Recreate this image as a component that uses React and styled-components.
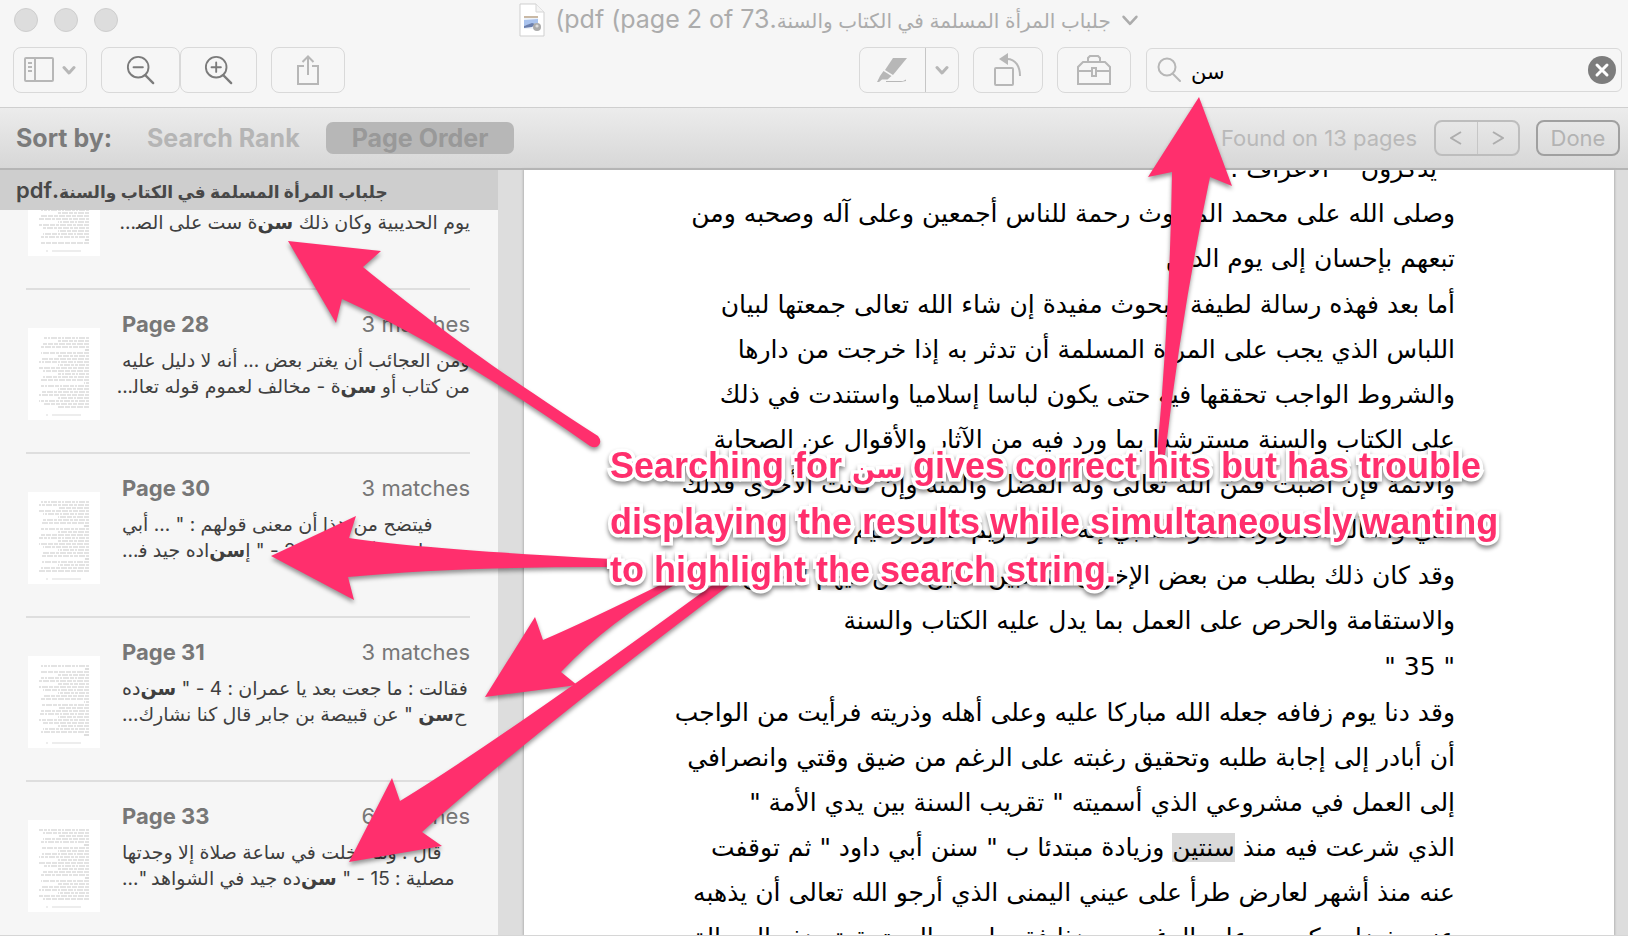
import { useState } from "react";
import styled, { createGlobalStyle } from "styled-components";

const GlobalStyle = createGlobalStyle`
  * {
    box-sizing: border-box;
  }
  body {
    margin: 0;
    background: #f6f6f6;
    font-family: Inter, "DejaVu Sans", sans-serif;
  }
  button, input {
    font: inherit;
  }
`

const Window = styled.div`
  position: relative;
  display: flex;
  flex-direction: column;
  height: 100vh;
  overflow: hidden;
  background: #f6f6f6;
  border-bottom: 1px solid #d6d6d6;
`

const TitleBar = styled.header`
  display: grid;
  grid-template-columns: 1fr auto 1fr;
  align-items: center;
  height: 40px;
  flex: none;
  padding: 0 14px;
`
const Lights = styled.div`
  display: flex;
  gap: 16px;
`
const Light = styled.button`
  width: 24px;
  height: 24px;
  padding: 0;
  border: 1px solid #cecece;
  border-radius: 50%;
  background: #dddddd;
`
const Title = styled.h1`
  display: flex;
  align-items: center;
  gap: 10px;
  margin: 0;
  padding-left: 30px;
  font-size: 25px;
  font-weight: 400;
  line-height: 32px;
  color: #acacac;
  white-space: nowrap;
`
const Arabic = styled.span`
  font-size: ${props => props.$size}px;
`

const Toolbar = styled.div`
  display: flex;
  align-items: center;
  height: 68px;
  flex: none;
  padding: 0 6px 8px 13px;
  border-bottom: 1px solid #cfcfcf;
`
const ToolButton = styled.button`
  display: flex;
  align-items: center;
  justify-content: center;
  gap: 8px;
  width: ${props => props.$width}px;
  height: 46px;
  margin-right: ${props => props.$after || 0}px;
  padding: 0;
  border: 1px solid #d9d9d9;
  border-radius: 8px;
  background: #f6f6f6;
  color: ${props => props.$strong ? "#7b7b7b" : "#b7b7b7"};
`
const SplitButton = styled.div`
  display: flex;
  width: 100px;
  height: 46px;
  margin-right: 14px;
  border: 1px solid #d9d9d9;
  border-radius: 8px;
`
const SplitPart = styled.button`
  display: flex;
  align-items: center;
  justify-content: center;
  flex: ${props => props.$grow};
  padding: 0;
  border: 0;
  border-left: ${props => props.$divided ? "1px solid #c6c6c6" : "0"};
  background: none;
  color: #b7b7b7;
`
const Spacer = styled.div`
  flex: 1;
`
const SearchField = styled.label`
  display: flex;
  align-items: center;
  gap: 10px;
  flex: 0 1 476px;
  min-width: 0;
  height: 44px;
  padding: 0 5px 0 10px;
  border: 1px solid #d9d9d9;
  border-radius: 6px;
`
const SearchInput = styled.input`
  flex: 1;
  min-width: 0;
  height: 40px;
  padding: 4px 0 0;
  border: 0;
  outline: 0;
  background: none;
  font-family: "DejaVu Sans", sans-serif;
  font-size: 21px;
  text-align: left;
  color: #000;
`
const ClearButton = styled.button`
  display: flex;
  padding: 0;
  border: 0;
  background: none;
`

const SortBar = styled.div`
  display: flex;
  align-items: center;
  height: 62px;
  flex: none;
  padding: 0 8px 0 16px;
  border-bottom: 2px solid #b5b5b5;
  background: linear-gradient(#ececec, #d7d7d7);
  font-size: 25px;
`
const SortLabel = styled.span`
  width: 111px;
  font-weight: 700;
  color: #7b7b7b;
`
const SortButton = styled.button`
  height: 32px;
  margin-right: 6px;
  padding: 0 ${props => props.$active ? 26 : 20}px;
  border: 0;
  border-radius: 7px;
  background: ${props => props.$active ? "#b7b7b7" : "none"};
  font-weight: 700;
  line-height: 32px;
  color: ${props => props.$active ? "#999999" : "#b5b5b5"};
`
const Found = styled.span`
  margin-right: 17px;
  font-size: 22px;
  color: #b9b9b9;
`
const Pager = styled.div`
  display: flex;
  width: 86px;
  height: 36px;
  margin-right: 16px;
  border: 2px solid #bdbdbd;
  border-radius: 8px;
`
const DoneButton = styled.button`
  width: 84px;
  height: 36px;
  padding: 0;
  border: 2px solid #a0a0a0;
  border-radius: 8px;
  background: none;
  font-size: 22px;
  color: #b3b3b3;
`

const Body = styled.main`
  display: flex;
  flex: 1;
  min-height: 0;
`
const Sidebar = styled.aside`
  display: flex;
  flex-direction: column;
  flex: 0 0 498px;
  overflow: hidden;
`
const FileName = styled.h2`
  z-index: 1;
  flex: none;
  height: 40px;
  margin: 0;
  padding: 0 16px;
  background: #cecece;
  font-size: 22px;
  font-weight: 600;
  line-height: 40px;
  text-align: left;
  color: #484848;
  white-space: nowrap;
`
const Results = styled.ul`
  margin: -84px 0 0;
  padding: 0 28px 0 26px;
  list-style: none;
`
const Result = styled.li`
  display: flex;
  align-items: flex-start;
  gap: 22px;
  height: 164px;
  padding: 20px 0 0 2px;
  border-bottom: 2px solid #dedede;
`
const Thumb = styled.svg`
  flex: none;
  margin-top: 18px;
  background: #fff;
`
const ResultText = styled.div`
  flex: 1;
  min-width: 0;
`
const ResultHead = styled.div`
  display: flex;
  justify-content: space-between;
  height: 38px;
  font-size: 22px;
  line-height: 28px;
  color: #777777;
`
const Snippet = styled.p`
  margin: 0;
  font-size: 19px;
  line-height: 26px;
  text-align: left;
  color: #3f3f3f;
  white-space: nowrap;
`

const Viewer = styled.section`
  display: flex;
  flex: 1;
  min-width: 0;
  padding: 0 14px 0 26px;
  background: #dddddd;
`
const Page = styled.article`
  flex: 1;
  min-width: 0;
  overflow: hidden;
  padding-right: 159px;
  background: #fff;
  box-shadow: 0 0 2px 1px #b5b5b5;
  font-family: "DejaVu Sans", sans-serif;
  font-size: 25px;
  line-height: 45px;
  color: #000;
  white-space: pre;
`
const Paragraph = styled.p`
  margin: ${props => props.$first ? "-24px 18px 0 0" : "0 0 1px"};
`
const Mark = styled.mark`
  background: #d9d9d9;
  color: inherit;
`

const Arrows = styled.svg`
  position: absolute;
  top: 0;
  left: 0;
  pointer-events: none;
  filter: drop-shadow(0 3px 2px rgba(0, 0, 0, 0.4));
`
const Note = styled.p`
  position: absolute;
  top: 438px;
  left: 610px;
  z-index: 2;
  margin: 0;
  font-family: "Liberation Sans", "DejaVu Sans", sans-serif;
  font-size: 36px;
  font-weight: 700;
  color: #ff2f6d;
  white-space: nowrap;
  -webkit-text-stroke: 7px #fff;
  paint-order: stroke fill;
  filter: drop-shadow(0 3px 2px rgba(0, 0, 0, 0.45));
`
const NoteLine = styled.span`
  display: block;
  height: ${props => props.$height}px;
  line-height: 56px;
`

// the match is cut off from its neighbours, so its letters do not join them
const Hit = ({ children }) => <b>{`\u200c${children}\u200c`}</b>

const RESULTS = [
  { lines: ["\u00a0", <>يوم الحديبية وكان ذلك <Hit>سن</Hit>ة ست على الص{"\u200d..."}</>] },
  {
    page: 28, matches: 3,
    lines: ["ومن العجائب أن يغتر بعض ... أنه لا دليل عليه", <>من كتاب أو <Hit>سن</Hit>ة - مخالف لعموم قوله تعال{"\u200d..."}</>]
  },
  {
    page: 30, matches: 3,
    lines: ['فيتضح من هذا أن معنى قولهم : " ... أبي', <>علي وللآخر " ... : 2 - " إ<Hit>سن</Hit>اده جيد ف{"\u200d..."}</>]
  },
  {
    page: 31, matches: 3,
    lines: [<>فقالت : ما جعت بعد يا عمران : 4 - " <Hit>سن</Hit>ده</>, <>ح<Hit>سن</Hit> " عن قبيصة بن جابر قال كنا نشارك...</>]
  },
  {
    page: 33, matches: 6,
    lines: ["قال : وما دخلت في ساعة صلاة إلا وجدتها", <>مصلية : 15 - " <Hit>سن</Hit>ده جيد في الشواهد "...</>]
  }
]

const PARAGRAPHS = [
  ["وصلى الله على محمد المبعوث رحمة للناس أجمعين وعلى آله وصحبه ومن", "تبعهم بإحسان إلى يوم الدين"],
  [
    "أما بعد فهذه رسالة لطيفة وبحوث مفيدة إن شاء الله تعالى جمعتها لبيان",
    "اللباس الذي يجب على المرأة المسلمة أن تدثر به إذا خرجت من دارها",
    "والشروط الواجب تحققها فيه حتى يكون لباسا إسلاميا واستندت في ذلك",
    "على الكتاب والسنة مسترشدا بما ورد فيه من الآثار والأقوال عن الصحابة",
    "والأئمة فإن أصبت فمن الله تعالى وله الفضل والمنة وإن كانت الأخرى فذلك",
    "مني وأسأله العفو والمغفرة لذنبي إنه عفو كريم غفور رحيم"
  ],
  ["وقد كان ذلك بطلب من بعض الإخوان المحبين الذين نظن فيهم الصلاح", "والاستقامة والحرص على العمل بما يدل عليه الكتاب والسنة"],
  ['" 35 "'],
  [
    "وقد دنا يوم زفافه جعله الله مباركا عليه وعلى أهله وذريته فرأيت من الواجب",
    "أن أبادر إلى إجابة طلبه وتحقيق رغبته على الرغم من ضيق وقتي وانصرافي",
    'إلى العمل في مشروعي الذي أسميته " تقريب السنة بين يدي الأمة "',
    <>الذي شرعت فيه منذ <Mark>سنتين</Mark> وزيادة مبتدئا ب " سنن أبي داود " ثم توقفت</>,
    "عنه منذ أشهر لعارض طرأ على عيني اليمنى الذي أرجو الله تعالى أن يذهبه",
    "عني بفضله وكرمه وعلى الرغم من هذا فقد بادرت إلى تحقيق هذه الرسالة"
  ]
]

const Chevron = ({ size = 14, weight = 3 }) => (
  <svg width={size} height={size} viewBox="0 0 14 14" fill="none" stroke="currentColor" strokeWidth={weight} strokeLinecap="round" strokeLinejoin="round">
    <path d="M2 4.5l5 5.5 5-5.5" />
  </svg>
)

const DocumentIcon = () => (
  <svg width="26" height="34" viewBox="0 0 26 34">
    <path d="M1 1h16l8 8v24H1z" fill="#fff" stroke="#cfcfcf" />
    <path d="M17 1v8h8" fill="#f4f4f4" stroke="#d5d5d5" />
    <path d="M5 13h14v13H5z" fill="#eef3fa" />
    <path d="M5 13h14v2H5z" fill="#c9b9a5" />
    <path d="M5 17l14-1v4l-7 1-7 2z" fill="#a9c3ee" />
    <path d="M5 23l8-3 4 1-4 3-8 1z" fill="#6a7fae" />
    <circle cx="18" cy="24" r="4" fill="#aaa" />
    <circle cx="18" cy="23" r="1.6" fill="#ddd" />
  </svg>
)

const SidebarIcon = () => (
  <svg width="30" height="26" viewBox="0 0 30 26" fill="none" stroke="currentColor" strokeWidth="2">
    <rect x="1" y="1" width="28" height="23" rx="1" />
    <path d="M11 1v23M4 6h4M4 10h4M4 14h4" />
  </svg>
)

const ZoomIcon = ({ plus }) => (
  <svg width="30" height="30" viewBox="0 0 32 32" fill="none" stroke="currentColor" strokeWidth="2" strokeLinecap="round">
    <circle cx="13" cy="13" r="11" />
    <path d="M20.5 21.5L29 30" strokeWidth="2.4" />
    <path d={plus ? "M8 13h10M13 8v10" : "M8 13h10"} />
  </svg>
)

const ShareIcon = () => (
  <svg width="24" height="32" viewBox="0 0 24 32" fill="none" stroke="currentColor" strokeWidth="2">
    <path d="M8 12H2v18h20V12h-6M12 21V3M6.500 8L12 2.500 17.500 8" />
  </svg>
)

const MarkerIcon = () => (
  <svg width="32" height="26" viewBox="0 0 32 26" fill="currentColor">
    <path d="M17 1h14L17 18l-8-5z" />
    <path d="M7.500 14l8 5-4 3.500H6L3 25H1l3-6z" />
    <path d="M10 24h17l3-1.500v1.500L25 25H10z" />
  </svg>
)

const RotateIcon = () => (
  <svg width="30" height="34" viewBox="0 0 30 34" fill="none" stroke="currentColor" strokeWidth="2">
    <rect x="2" y="15" width="18" height="17" rx="1" />
    <path d="M14 6c9 0 13 8 13 17" />
    <path d="M6 6l9-6v12z" fill="currentColor" stroke="none" />
  </svg>
)

const ToolboxIcon = () => (
  <svg width="36" height="30" viewBox="0 0 36 30" fill="none" stroke="currentColor" strokeWidth="2">
    <path d="M2 29V12l5-5h22l5 5v17zM2 16h14M20 16h14M12 7V3l2-2h8l2 2v4" />
    <rect x="16" y="13" width="4" height="8" />
  </svg>
)

const Magnifier = () => (
  <svg width="24" height="26" viewBox="0 0 24 26" fill="none" stroke="#b7b7b7" strokeWidth="2" strokeLinecap="round">
    <circle cx="10" cy="10" r="8.500" />
    <path d="M16 17l7 7" />
  </svg>
)

const ClearIcon = () => (
  <svg width="28" height="28" viewBox="0 0 28 28">
    <circle cx="14" cy="14" r="14" fill="#7d7d7d" />
    <path d="M9 9l10 10M19 9L9 19" stroke="#fff" strokeWidth="3" strokeLinecap="round" />
  </svg>
)

const Angle = ({ right }) => (
  <svg width="12" height="16" viewBox="0 0 12 16" fill="none" stroke="#adadad" strokeWidth="2">
    <path d={right ? "M1 2l10 6-10 6" : "M11 2L1 8l10 6"} />
  </svg>
)

function PageThumb({ seed }) {
  const rows = [];
  for (let i = 0; i < 24; i++) {
    const n = (i * 7 + seed * 5) % 11;
    rows.push({ y: 10 + i * 3, x: n < 1 ? 56 : n < 4 ? 30 : 11 + (n % 3) * 2 });
  }
  return (
    <Thumb width="72" height="92" viewBox="0 0 72 92" stroke="#c8c8c8" strokeWidth="1.2">
      {rows.map((row, i) => <path key={row.y} d={`M61 ${row.y}H${row.x}`} strokeDasharray={`${3 + i % 3} 1 6 1 ${2 + i % 4} 1`} />)}
      <path d="M53 87H24M20 87h-2" stroke="#dcdcdc" />
    </Thumb>
  )
}

export default function App() {
  const [query, setQuery] = useState("سن");
  const [order, setOrder] = useState("page");

  return <>
    <GlobalStyle />
    <Window>
      <TitleBar>
        <Lights>
          <Light aria-label="Close" />
          <Light aria-label="Minimize" />
          <Light aria-label="Zoom" />
        </Lights>
        <Title>
          <DocumentIcon />
          <span dir="rtl"><Arabic $size={20}>جلباب المرأة المسلمة في الكتاب والسنة</Arabic>.<bdi dir="ltr">pdf (page 2 of 73</bdi>)</span>
          <Chevron size={18} weight={2} />
        </Title>
      </TitleBar>

      <Toolbar>
        <ToolButton $width={74} $after={14} aria-label="View"><SidebarIcon /><Chevron /></ToolButton>
        <ToolButton $width={79} $strong aria-label="Zoom out"><ZoomIcon /></ToolButton>
        <ToolButton $width={77} $after={14} $strong aria-label="Zoom in"><ZoomIcon plus /></ToolButton>
        <ToolButton $width={74} aria-label="Share"><ShareIcon /></ToolButton>
        <Spacer />
        <SplitButton>
          <SplitPart $grow={2} aria-label="Highlight"><MarkerIcon /></SplitPart>
          <SplitPart $grow={1} $divided aria-label="Highlight colour"><Chevron /></SplitPart>
        </SplitButton>
        <ToolButton $width={70} $after={14} aria-label="Rotate"><RotateIcon /></ToolButton>
        <ToolButton $width={74} $after={15} aria-label="Markup"><ToolboxIcon /></ToolButton>
        <SearchField>
          <Magnifier />
          <SearchInput aria-label="Search" dir="rtl" value={query} onChange={(event) => setQuery(event.target.value)} />
          <ClearButton aria-label="Clear" onClick={() => setQuery("")}><ClearIcon /></ClearButton>
        </SearchField>
      </Toolbar>

      <SortBar>
        <SortLabel>Sort by:</SortLabel>
        <SortButton $active={order === "rank"} onClick={() => setOrder("rank")}>Search Rank</SortButton>
        <SortButton $active={order === "page"} onClick={() => setOrder("page")}>Page Order</SortButton>
        <Spacer />
        <Found>Found on 13 pages</Found>
        <Pager>
          <SplitPart $grow={1} aria-label="Previous"><Angle /></SplitPart>
          <SplitPart $grow={1} $divided aria-label="Next"><Angle right /></SplitPart>
        </Pager>
        <DoneButton>Done</DoneButton>
      </SortBar>

      <Body>
        <Sidebar>
          <FileName dir="rtl"><Arabic $size={17}>جلباب المرأة المسلمة في الكتاب والسنة</Arabic>.pdf</FileName>
          <Results>
            {RESULTS.map((result, index) => (
              <Result key={index}>
                <PageThumb seed={index} />
                <ResultText>
                  <ResultHead>
                    {result.page && <><b>Page {result.page}</b><span>{result.matches} matches</span></>}
                  </ResultHead>
                  {result.lines.map((line, i) => <Snippet key={i} dir="rtl">{line}</Snippet>)}
                </ResultText>
              </Result>
            ))}
          </Results>
        </Sidebar>
        <Viewer>
          <Page dir="rtl">
            <Paragraph $first>يذكرون    الأعراف .</Paragraph>
            {PARAGRAPHS.map((lines, index) => (
              <Paragraph key={index}>
                {lines.map((line, i) => <span key={i}>{line}{"\n"}</span>)}
              </Paragraph>
            ))}
          </Page>
        </Viewer>
      </Body>

      <Arrows width="1628" height="936" viewBox="0 0 1628 936" fill="#ff2f6d">
        <path d="M288 241L381 251 363 267C425 317 480 360 598 436Q602 441 599 445 596 449 590 446 450 348 342 299L336 323Z" />
        <path d="M271 556L356 516 349 538Q420 549 612 559L612 567Q450 567 348 577L354 600Z" />
        <path d="M485 697L535 617 543 640Q585 622 664 583L678 583Q610 620 561 672L577 685Z" />
        <path d="M349 862L392 778 400 801Q500 740 715 583L732 583Q530 735 422 832L442 846Z" />
        <path d="M1199 97L1232 186 1210 177Q1182 310 1165 455L1157 455Q1170 310 1172 172L1148 177Z" />
      </Arrows>
      <Note>
        <NoteLine $height={56}>Searching for <Arabic $size={27}>سن</Arabic> gives correct hits but has trouble</NoteLine>
        <NoteLine $height={48}>displaying the results while simultaneously wanting</NoteLine>
        <NoteLine $height={56}>to highlight the search string.</NoteLine>
      </Note>
    </Window>
  </>
}
